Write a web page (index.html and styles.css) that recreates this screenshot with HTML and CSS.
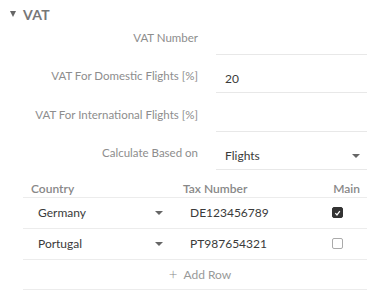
FILE: index.html
```
<!DOCTYPE html>
<html>
<head>
<meta charset="utf-8">
<link rel="stylesheet" href="styles.css">
</head>
<body>
<div class="section">
  <div class="section-head"><span class="tri"></span><span class="title">VAT</span></div>
  <div class="form">
    <div class="field">
      <div class="label">VAT Number</div>
      <div class="control"></div>
    </div>
    <div class="field">
      <div class="label">VAT For Domestic Flights [%]</div>
      <div class="control">20</div>
    </div>
    <div class="field">
      <div class="label">VAT For International Flights [%]</div>
      <div class="control"></div>
    </div>
    <div class="field">
      <div class="label">Calculate Based on</div>
      <div class="control select">Flights<span class="caret"></span></div>
    </div>
  </div>
  <div class="table">
    <div class="row head">
      <div class="c-country">Country</div>
      <div class="c-tax">Tax Number</div>
      <div class="c-main">Main</div>
    </div>
    <div class="row">
      <div class="c-country cell">Germany<span class="caret"></span></div>
      <div class="c-tax cell">DE123456789</div>
      <div class="c-main cell"><span class="check on"><svg viewBox="0 0 10 10" width="10" height="10"><path d="M2.6 5.2 L4.4 7.2 L7.6 2.8" fill="none" stroke="#fff" stroke-width="1.4"/></svg></span></div>
    </div>
    <div class="row">
      <div class="c-country cell">Portugal<span class="caret"></span></div>
      <div class="c-tax cell">PT987654321</div>
      <div class="c-main cell"><span class="check"></span></div>
    </div>
    <div class="row add">
      <div class="add-row"><span class="plus">+</span>Add Row</div>
    </div>
  </div>
</div>
</body>
</html>
```
FILE: styles.css
```
* { box-sizing: border-box; }
body {
  margin: 0;
  background: #fff;
  font-family: Lato, "Open Sans", sans-serif;
  color: #333;
  width: 374px;
  height: 295px;
  overflow: hidden;
}
.section { padding: 6px 7px 0 23px; }
.section-head {
  display: flex;
  align-items: center;
  margin-left: -13px;
  height: 16px;
}
.tri {
  width: 0; height: 0;
  border-left: 3.5px solid transparent;
  border-right: 3.5px solid transparent;
  border-top: 6px solid #666;
  margin-right: 7px;
}
.title { font-weight: 700; font-size: 14px; color: #777; letter-spacing: 0.3px; }
.form { margin-top: 1px; }
.field {
  display: flex;
  align-items: flex-start;
  height: 38.4px;
}
.label {
  width: 175px;
  text-align: right;
  font-size: 11.5px;
  color: #8d8d8d;
  padding-top: 8px;
}
.control {
  margin-left: 18px;
  flex: 1;
  border-bottom: 1px solid #e8e8e8;
  font-size: 12px;
  color: #3a3a3a;
  padding: 10px 0 0 9px;
  position: relative;
  height: 32px;
}
.select .caret { position: absolute; right: 7px; top: 16px; }
.caret {
  display: inline-block;
  width: 0; height: 0;
  border-left: 4.5px solid transparent;
  border-right: 4.5px solid transparent;
  border-top: 4.5px solid #666;
}
.table { margin-top: 0; }
.row {
  display: flex;
  height: 31px;
  border-bottom: 1px solid #ececec;
  align-items: center;
  font-size: 12px;
}
.row.head { height: 21px; font-weight: 600; color: #888; align-items: flex-end; padding-bottom: 1px; }
.c-country { width: 160px; padding-left: 8px; display: flex; align-items: center; }
.c-tax { flex: 1; padding-left: 0; }
.c-main { width: 60px; text-align: right; padding-right: 7px; }
.cell.c-country { padding-left: 15px; justify-content: space-between; padding-right: 20px; color: #3a3a3a; }
.cell.c-tax { padding-left: 7px; color: #3a3a3a; }
.cell.c-main { display: flex; justify-content: flex-end; padding-right: 24px; }
.check {
  width: 11px; height: 11px;
  border: 1px solid #aaa;
  border-radius: 2px;
  display: flex; align-items: center; justify-content: center;
}
.check.on { background: #333; border-color: #333; }
.add { justify-content: center; color: #999; height: 30px; }
.add-row { font-size: 12px; display: flex; align-items: center; padding-left: 10px; }
.plus { font-size: 15px; font-weight: 300; color: #888; margin-right: 6px; line-height: 1; }
```
